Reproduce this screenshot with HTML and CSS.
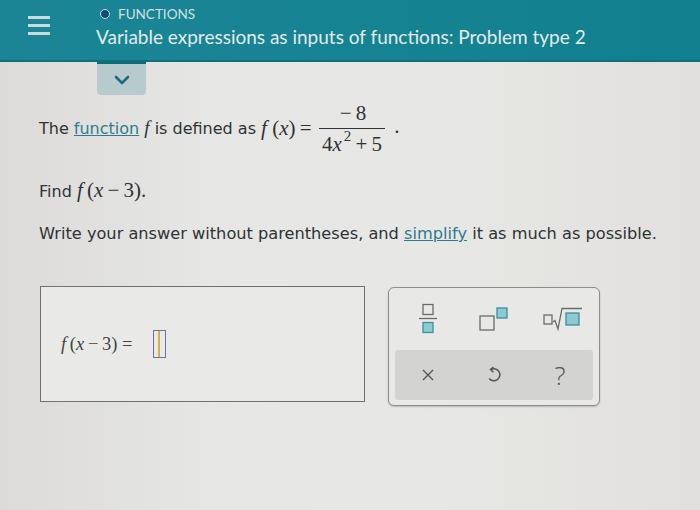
FILE: index.html
```html
<!DOCTYPE html>
<html lang="en">
<head>
    <meta charset="UTF-8">
    <title>Variable expressions as inputs of functions</title>
    <link rel="stylesheet" href="styles.css">
</head>
<body>
    <!-- Topic header -->
    <header class="topbar">
        <div class="menu-btn">
            <span></span><span></span><span></span>
        </div>
        <div class="topic">
            <div class="topic-label"><span class="topic-dot"></span>FUNCTIONS</div>
            <div class="topic-title">Variable expressions as inputs of functions: Problem type 2</div>
        </div>
    </header>

    <div class="drop-tab">
        <svg width="16" height="10" viewBox="0 0 16 10">
            <path d="M2 2 L8 8 L14 2" fill="none" stroke="#1d6b79" stroke-width="2.6" stroke-linecap="round" stroke-linejoin="round"/>
        </svg>
    </div>

    <main class="problem">
        <div class="statement">
            <span>The <a href="#" class="term">function</a>&nbsp;<i class="mi">f</i> is defined as&nbsp;</span>
            <span class="math"><i class="mi">f</i>&nbsp;(<i class="mi">x</i>)&thinsp;=&thinsp;</span>
            <span class="frac">
                <span class="num">&minus;&thinsp;8</span>
                <span class="den">4<i class="mi">x</i><sup>2</sup>&thinsp;+&thinsp;5</span>
            </span>
            <span class="period">.</span>
        </div>

        <p class="find">Find&nbsp;<span class="math"><i class="mi">f</i>&thinsp;(<i class="mi">x</i>&thinsp;&minus;&thinsp;3).</span></p>

        <p class="instr">Write your answer without parentheses, and <a href="#" class="term">simplify</a> it as much as possible.</p>

        <div class="answer-row">
            <div class="answer-box">
                <span class="answer-lhs"><i class="mi">f</i>&thinsp;(<i class="mi">x</i>&thinsp;&minus;&thinsp;3)&nbsp;=</span>
                <span class="slot"><span class="caret"></span></span>
            </div>

            <div class="keypad">
                <div class="key-row">
                    <button class="key" title="Fraction">
                        <svg width="24" height="32" viewBox="0 0 24 32">
                            <rect x="7" y="1.5" width="10" height="10" fill="none" stroke="#6b6b6b" stroke-width="1.3"/>
                            <line x1="3" y1="15.5" x2="21" y2="15.5" stroke="#6b6b6b" stroke-width="1.3"/>
                            <rect x="7" y="19.5" width="10" height="10" fill="#8ccad1" stroke="#3a8f9b" stroke-width="1.3"/>
                        </svg>
                    </button>
                    <button class="key" title="Exponent">
                        <svg width="32" height="26" viewBox="0 0 32 26">
                            <rect x="2" y="10" width="14" height="14" fill="none" stroke="#6b6b6b" stroke-width="1.3"/>
                            <rect x="19" y="2" width="10" height="10" fill="#8ccad1" stroke="#3a8f9b" stroke-width="1.3"/>
                        </svg>
                    </button>
                    <button class="key key-root" title="Root">
                        <svg width="42" height="26" viewBox="0 0 42 26">
                            <rect x="2" y="9" width="8" height="9" fill="none" stroke="#6b6b6b" stroke-width="1.3"/>
                            <path d="M11 16 L13 14.5 L16 23 L20 2.5 L40 2.5" fill="none" stroke="#6b6b6b" stroke-width="1.3"/>
                            <rect x="24" y="7" width="13" height="12" fill="#8ccad1" stroke="#3a8f9b" stroke-width="1.3"/>
                        </svg>
                    </button>
                </div>
                <div class="key-row actions">
                    <button class="key" title="Clear">
                        <svg width="14" height="14" viewBox="0 0 14 14">
                            <path d="M2 2 L12 12 M12 2 L2 12" stroke="#555" stroke-width="1.4"/>
                        </svg>
                    </button>
                    <button class="key" title="Undo">
                        <svg width="16" height="18" viewBox="0 0 16 18">
                            <path d="M5 3.5 A6 6 0 1 1 3.2 12.5" fill="none" stroke="#555" stroke-width="1.5"/>
                            <path d="M7.5 1 L4.5 3.6 L7.5 6.2" fill="none" stroke="#555" stroke-width="1.5"/>
                        </svg>
                    </button>
                    <button class="key key-help" title="Help">?</button>
                </div>
            </div>
        </div>
    </main>
</body>
</html>
```

FILE: styles.css
```css
body {
    margin: 0;
    font-family: "DejaVu Sans", Verdana, sans-serif;
    background: linear-gradient(90deg, #dcdbd9 0%, #e6e6e4 30%, #e7e8e5 60%, #e2e0de 100%);
    color: #2e3335;
    height: 510px;
    overflow: hidden;
}

/* Header */
.topbar {
    height: 60px;
    display: flex;
    background: linear-gradient(90deg, #1b8595 0%, #168393 50%, #12808f 100%);
    border-bottom: 2px solid #106f7c;
}

.menu-btn {
    width: 96px;
    display: flex;
    flex-direction: column;
    gap: 5.5px;
    padding: 16px 0 0 28px;
    box-sizing: border-box;
}

.menu-btn span {
    display: block;
    width: 22px;
    height: 2.5px;
    background-color: #c9d9dc;
}

.topic {
    padding-top: 6px;
}

.topic-label {
    display: flex;
    align-items: center;
    font-family: Lato, "Open Sans", sans-serif;
    font-size: 13.5px;
    color: #d2e0e3;
    margin-left: 4px;
}

.topic-dot {
    width: 8px;
    height: 8px;
    border-radius: 50%;
    background-color: #0f4d78;
    border: 1.5px solid #c8dbe0;
    margin-right: 8px;
}

.topic-title {
    font-family: Lato, "Open Sans", sans-serif;
    font-size: 19px;
    color: #e2eaec;
    margin-top: 3px;
}

.drop-tab {
    width: 49px;
    height: 31px;
    margin-left: 97px;
    background-color: #b7cbcf;
    border-top: 2px solid #0f6b78;
    border-radius: 0 0 4px 4px;
    display: flex;
    align-items: center;
    justify-content: center;
}

/* Problem text */
.problem {
    padding-left: 39px;
    font-size: 16px;
}

.mi {
    font-family: "Liberation Serif", "Times New Roman", serif;
    font-style: italic;
}

.math {
    font-family: "Liberation Serif", "Times New Roman", serif;
    font-size: 21px;
}

.term {
    color: #2c7d8c;
    text-decoration: underline;
}

.statement {
    display: flex;
    align-items: center;
    height: 62px;
    margin-top: 2px;
}

.statement .mi {
    font-size: 19px;
}

.statement .math .mi,
.find .mi {
    font-size: 21px;
}

.frac {
    display: inline-flex;
    flex-direction: column;
    align-items: center;
    font-family: "Liberation Serif", "Times New Roman", serif;
    font-size: 21px;
    padding: 0 3px;
}

.num {
    border-bottom: 1.3px solid #2e3335;
    line-height: 24px;
    padding: 0 19px 3px 21px;
}

.den {
    line-height: 24px;
    padding-top: 3px;
}

.den .mi {
    font-size: 21px;
}

.den sup {
    font-size: 15px;
    vertical-align: 10px;
    line-height: 0;
    margin-left: 2px;
}

.period {
    font-family: "Liberation Serif", serif;
    font-size: 21px;
    margin-top: -4px;
    margin-left: 6px;
}

.find {
    margin: 19px 0 0;
    line-height: 24px;
}

.instr {
    margin: 18px 0 0;
    line-height: 24px;
    font-size: 16.2px;
}

/* Answer area */
.answer-row {
    display: flex;
    align-items: flex-start;
    gap: 23px;
    margin-top: 40px;
    margin-left: 1px;
}

.answer-box {
    width: 325px;
    height: 116px;
    box-sizing: border-box;
    border: 1.5px solid #707070;
    background-color: #e9eae7;
    display: flex;
    align-items: center;
    padding-left: 20px;
}

.answer-lhs {
    font-family: "Liberation Serif", serif;
    font-size: 18.5px;
    color: #444;
}

.slot {
    width: 11px;
    height: 26px;
    margin-left: 20px;
    border: 1.5px solid #6a6fb8;
    display: flex;
    justify-content: center;
}

.caret {
    width: 2px;
    background-color: #d6b042;
}

.keypad {
    width: 212px;
    height: 119px;
    box-sizing: border-box;
    margin-top: 1px;
    border: 1px solid #8d8d8d;
    border-radius: 6px;
    background-color: #e8e9e6;
    box-shadow: 0 1px 2px rgba(0, 0, 0, 0.2);
    padding: 0 6px 5px;
    display: flex;
    flex-direction: column;
}

.key-row {
    display: grid;
    grid-template-columns: repeat(3, 1fr);
    height: 62px;
    align-items: center;
}

.key-row.actions {
    height: 50px;
    background-color: #d3d3d1;
    border-radius: 3px;
}

.key {
    background: none;
    border: none;
    padding: 0;
    display: flex;
    justify-content: center;
    align-items: center;
    cursor: pointer;
}

.key-root {
    padding-left: 6px;
}

.key-help {
    font-family: "Open Sans", sans-serif;
    font-size: 26px;
    font-weight: 300;
    color: #555;
}
```
